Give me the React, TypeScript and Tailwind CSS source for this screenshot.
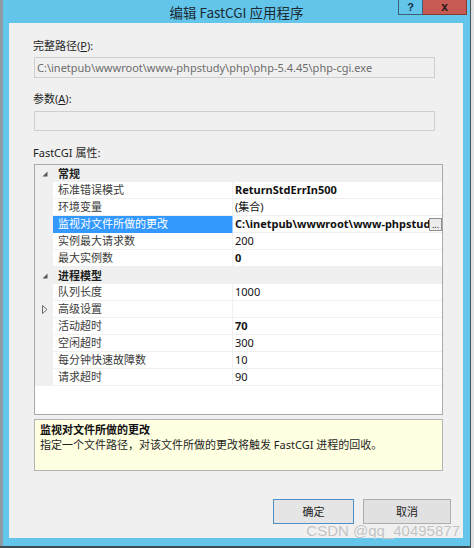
import React from "react";

type Row =
  | { kind: "cat"; name: string }
  | { kind: "prop"; name: string; value: string; bold?: boolean; selected?: boolean; collapsed?: boolean; button?: boolean };

const rows: Row[] = [
  { kind: "cat", name: "常规" },
  { kind: "prop", name: "标准错误模式", value: "ReturnStdErrIn500", bold: true },
  { kind: "prop", name: "环境变量", value: "(集合)" },
  { kind: "prop", name: "监视对文件所做的更改", value: "C:\\inetpub\\wwwroot\\www-phpstudy\\php\\php-5.4.45\\php.ini", bold: true, selected: true, button: true },
  { kind: "prop", name: "实例最大请求数", value: "200" },
  { kind: "prop", name: "最大实例数", value: "0", bold: true },
  { kind: "cat", name: "进程模型" },
  { kind: "prop", name: "队列长度", value: "1000" },
  { kind: "prop", name: "高级设置", value: "", collapsed: true },
  { kind: "prop", name: "活动超时", value: "70", bold: true },
  { kind: "prop", name: "空闲超时", value: "300" },
  { kind: "prop", name: "每分钟快速故障数", value: "10" },
  { kind: "prop", name: "请求超时", value: "90" },
];

function ExpandedGlyph() {
  return (
    <svg width="6" height="6" viewBox="0 0 6 6">
      <polygon points="5.5,0.5 5.5,5.5 0.5,5.5" fill="#595959" />
    </svg>
  );
}

function CollapsedGlyph() {
  return (
    <svg width="6" height="9" viewBox="0 0 6 9">
      <polygon points="0.5,0.5 5,4.5 0.5,8.5" fill="none" stroke="#6a6a6a" strokeWidth="1" />
    </svg>
  );
}

export default function App() {
  return (
    <div className="flex h-[548px] w-[474px] overflow-hidden bg-[#d9dde0] font-['Noto_Sans','Noto_Sans_CJK_SC',sans-serif] text-[11px] leading-[14px] text-[#1e1e1e]">
      {/* left strip (background window) */}
      <div className="w-[3px] shrink-0 bg-[#8e9ba4]" />

      {/* dialog window */}
      <div className="flex w-[467px] shrink-0 flex-col bg-[#62c5e9]">
        {/* title bar */}
        <div className="grid h-[23px] shrink-0 grid-cols-[1fr_auto_1fr]">
          <div />
          <div className="flex items-center pt-[1px] font-['Noto_Sans_CJK_SC',sans-serif] text-[13.5px] text-[#1b2a35]">
            编辑 FastCGI 应用程序
          </div>
          <div className="flex items-start justify-end pr-[3px]">
            <div className="flex h-[15px] w-[25px] items-center justify-center border border-t-0 border-[#3f5f74] bg-[#62c5e9] font-['Liberation_Sans',sans-serif] text-[11px] font-bold leading-none text-[#1a2f45]">
              ?
            </div>
            <div className="flex h-[15px] w-[44px] items-center justify-center border border-t-0 border-l-0 border-[#8a3a35] bg-[#c75a52] font-['Liberation_Sans',sans-serif] text-[12px] font-bold leading-none text-[#2a1a1a]">
              x
            </div>
          </div>
        </div>

        {/* client area */}
        <div className="relative ml-[6px] mr-[7px] flex h-[515px] flex-col bg-[#f0f0f0] pl-[25px] pr-[20px]">
          <div className="-ml-[1px] mt-[16px] h-[14px]">
            完整路径(<span className="underline">P</span>):
          </div>
          <div className="mt-[4px] flex h-[21px] w-[401px] items-center border border-[#cfcfcf] bg-[#f0f0f0] pl-[2px] text-[#6d6d6d]">
            C:\inetpub\wwwroot\www-phpstudy\php\php-5.4.45\php-cgi.exe
          </div>

          <div className="-ml-[1px] mt-[14px] h-[14px]">
            参数(<span className="underline">A</span>):
          </div>
          <div className="mt-[5px] h-[20px] w-[401px] border border-[#cfcfcf] bg-[#f0f0f0]" />

          <div className="-ml-[1px] mt-[15px] h-[14px]">FastCGI 属性:</div>

          {/* property grid */}
          <div className="mt-[4px] flex h-[251px] w-[409px] flex-col border border-[#a9a9a9] bg-white">
            {rows.map((r, i) =>
              r.kind === "cat" ? (
                <div key={i} className="flex h-[17px] shrink-0 items-center bg-[#f0f0f0]">
                  <div className="flex w-[18px] items-center justify-center pl-[1px]">
                    <ExpandedGlyph />
                  </div>
                  <div className="pl-[5px] font-bold text-[#1e1e1e]">{r.name}</div>
                </div>
              ) : (
                <div key={i} className="flex h-[17px] shrink-0">
                  <div className="flex w-[18px] items-center justify-center bg-[#f0f0f0] pl-[2px]">
                    {r.collapsed ? <CollapsedGlyph /> : null}
                  </div>
                  <div
                    className={
                      r.selected
                        ? "flex w-[179px] items-center border-b border-[#3399ff] bg-[#3399ff] pl-[5px] text-white"
                        : "flex w-[179px] items-center border-b border-[#f0f0f0] bg-white pl-[5px] text-[#3c3c3c]"
                    }
                  >
                    {r.name}
                  </div>
                  <div className={r.selected ? "w-px bg-[#99ccff]" : "w-px bg-[#f0f0f0]"} />
                  <div className="flex min-w-0 flex-1 items-center border-b border-[#f0f0f0]">
                    <div
                      className={
                        "min-w-0 flex-1 overflow-hidden whitespace-nowrap pl-[2px] text-[#111] " +
                        (r.bold ? "font-bold" : "")
                      }
                    >
                      {r.value}
                    </div>
                    {r.button ? (
                      <div className="flex h-[13px] w-[13px] shrink-0 items-end justify-center border border-[#8e8e8e] bg-[#ececec] pb-[1px] text-[9px] leading-[8px] text-[#222]">
                        ...
                      </div>
                    ) : null}
                  </div>
                </div>
              )
            )}
          </div>

          {/* description */}
          <div className="mt-[4px] h-[52px] w-[409px] border border-[#b4b4b4] bg-[#ffffe1] pl-[5px] pt-[3px]">
            <div className="h-[15px] font-bold text-[#111]">监视对文件所做的更改</div>
            <div className="h-[15px] text-[#1e1e1e]">指定一个文件路径，对该文件所做的更改将触发 FastCGI 进程的回收。</div>
          </div>

          {/* buttons */}
          <div className="-mr-[8px] mt-[28px] flex justify-end gap-[9px]">
            <div className="flex h-[25px] w-[81px] items-center justify-center border border-[#4e8fc7] bg-[#e5e5e5] text-[#1e1e1e]">
              确定
            </div>
            <div className="flex h-[25px] w-[88px] items-center justify-center border border-[#adadad] bg-[#e1e1e1] text-[#1e1e1e]">
              取消
            </div>
          </div>

          {/* watermark */}
          <div className="absolute bottom-[-1px] right-[3px] font-['Liberation_Sans',sans-serif] text-[15px] leading-[17px] text-[#c2c2c2] [text-shadow:0_0_1px_#ffffff]">
            CSDN @qq_40495877
          </div>
        </div>
        <div className="h-[8px] shrink-0" />
        <div className="-ml-[3px] h-[2px] shrink-0 bg-[#3e4a54]" />
      </div>

      {/* right strip */}
      <div className="w-px shrink-0 bg-[#46525c]" />
      <div className="flex-1 bg-[#dfe3e6]" />
    </div>
  );
}
